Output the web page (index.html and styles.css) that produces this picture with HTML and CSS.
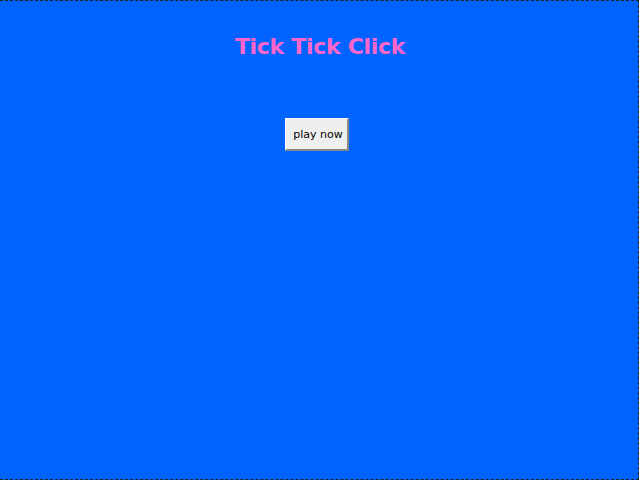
FILE: index.html
```html
<!DOCTYPE html>
<html lang="en">
<head>
  <meta charset="UTF-8">
  <title>Tick Tick Click</title>
  <link rel="stylesheet" href="styles.css">
</head>
<body>
  <div class="stage">
    <h1 class="title">Tick Tick Click</h1>
    <button class="play" type="button">play now</button>
  </div>
</body>
</html>
```

FILE: styles.css
```css
body {
  margin: 0;
  font-family: "DejaVu Sans", Verdana, sans-serif;
}
.stage {
  width: 638px;
  height: 478px;
  border: 1px dashed #222;
  border-left: none;
  background-color: #0063ff;
  display: flex;
  flex-direction: column;
  align-items: center;
}
.title {
  margin: 32px 0 0 2px;
  color: #ff66cc;
  font-size: 22px;
  font-weight: bold;
  line-height: 28px;
  letter-spacing: -0.3px;
}
.play {
  margin: 57px 4px 0 0;
  width: 64px;
  height: 33px;
  padding: 0 0 0 3px;
  background-color: #efefef;
  border-style: solid;
  border-width: 1px 2px 2px 1px;
  border-color: #fff #888 #888 #fff;
  font-family: "DejaVu Sans", Verdana, sans-serif;
  font-size: 11px;
  color: #000;
}
```
